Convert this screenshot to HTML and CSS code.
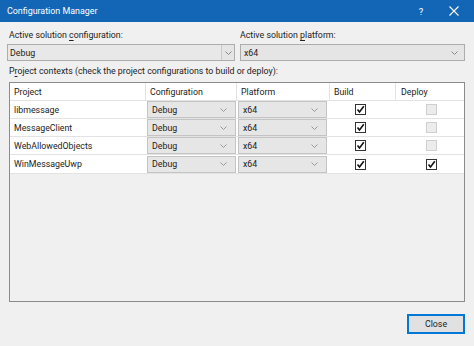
FILE: index.html
```html
<!DOCTYPE html>
<html>
<head>
<meta charset="utf-8">
<link rel="stylesheet" href="styles.css">
</head>
<body>
<div class="window">
  <div class="titlebar">
    <span class="title">Configuration Manager</span>
    <span class="help">?</span>
    <span class="close-x"><svg width="10" height="10" viewBox="0 0 10 10"><path d="M0.5 0.5 L9.5 9.5 M9.5 0.5 L0.5 9.5" stroke="#fff" stroke-width="1.1" fill="none"/></svg></span>
  </div>
  <div class="content">
    <div class="top">
      <div class="field">
        <div class="label">Active solution <u>c</u>onfiguration:</div>
        <div class="combo combo-edit">
          <div class="edit">Debug</div>
          <div class="btn"><svg width="7" height="4" viewBox="0 0 7 4"><path d="M0.5 0.5 L3.5 3.5 L6.5 0.5" stroke="#888" fill="none"/></svg></div>
        </div>
      </div>
      <div class="field">
        <div class="label">Active solution <u>p</u>latform:</div>
        <div class="combo">
          <span>x64</span>
          <svg width="7" height="4" viewBox="0 0 7 4"><path d="M0.5 0.5 L3.5 3.5 L6.5 0.5" stroke="#888" fill="none"/></svg>
        </div>
      </div>
    </div>
    <div class="label ctx">P<u>r</u>oject contexts (check the project configurations to build or deploy):</div>
    <div class="grid">
      <div class="row head">
        <div class="cell">Project</div>
        <div class="cell">Configuration</div>
        <div class="cell">Platform</div>
        <div class="cell">Build</div>
        <div class="cell">Deploy</div>
      </div>
      <div class="row">
        <div class="cell name">libmessage</div>
        <div class="cell"><div class="cc"><span>Debug</span><svg width="7" height="4" viewBox="0 0 7 4"><path d="M0.5 0.5 L3.5 3.5 L6.5 0.5" stroke="#999" fill="none"/></svg></div></div>
        <div class="cell"><div class="cc"><span>x64</span><svg width="7" height="4" viewBox="0 0 7 4"><path d="M0.5 0.5 L3.5 3.5 L6.5 0.5" stroke="#999" fill="none"/></svg></div></div>
        <div class="cell ck"><span class="box on"><svg width="9" height="9" viewBox="0 0 9 9"><path d="M1.5 4.5 L3.5 7 L7.8 1.2" stroke="#111" stroke-width="1.6" fill="none"/></svg></span></div>
        <div class="cell ck"><span class="box dis"></span></div>
      </div>
      <div class="row">
        <div class="cell name">MessageClient</div>
        <div class="cell"><div class="cc"><span>Debug</span><svg width="7" height="4" viewBox="0 0 7 4"><path d="M0.5 0.5 L3.5 3.5 L6.5 0.5" stroke="#999" fill="none"/></svg></div></div>
        <div class="cell"><div class="cc"><span>x64</span><svg width="7" height="4" viewBox="0 0 7 4"><path d="M0.5 0.5 L3.5 3.5 L6.5 0.5" stroke="#999" fill="none"/></svg></div></div>
        <div class="cell ck"><span class="box on"><svg width="9" height="9" viewBox="0 0 9 9"><path d="M1.5 4.5 L3.5 7 L7.8 1.2" stroke="#111" stroke-width="1.6" fill="none"/></svg></span></div>
        <div class="cell ck"><span class="box dis"></span></div>
      </div>
      <div class="row">
        <div class="cell name">WebAllowedObjects</div>
        <div class="cell"><div class="cc"><span>Debug</span><svg width="7" height="4" viewBox="0 0 7 4"><path d="M0.5 0.5 L3.5 3.5 L6.5 0.5" stroke="#999" fill="none"/></svg></div></div>
        <div class="cell"><div class="cc"><span>x64</span><svg width="7" height="4" viewBox="0 0 7 4"><path d="M0.5 0.5 L3.5 3.5 L6.5 0.5" stroke="#999" fill="none"/></svg></div></div>
        <div class="cell ck"><span class="box on"><svg width="9" height="9" viewBox="0 0 9 9"><path d="M1.5 4.5 L3.5 7 L7.8 1.2" stroke="#111" stroke-width="1.6" fill="none"/></svg></span></div>
        <div class="cell ck"><span class="box dis"></span></div>
      </div>
      <div class="row">
        <div class="cell name">WinMessageUwp</div>
        <div class="cell"><div class="cc"><span>Debug</span><svg width="7" height="4" viewBox="0 0 7 4"><path d="M0.5 0.5 L3.5 3.5 L6.5 0.5" stroke="#999" fill="none"/></svg></div></div>
        <div class="cell"><div class="cc"><span>x64</span><svg width="7" height="4" viewBox="0 0 7 4"><path d="M0.5 0.5 L3.5 3.5 L6.5 0.5" stroke="#999" fill="none"/></svg></div></div>
        <div class="cell ck"><span class="box on"><svg width="9" height="9" viewBox="0 0 9 9"><path d="M1.5 4.5 L3.5 7 L7.8 1.2" stroke="#111" stroke-width="1.6" fill="none"/></svg></span></div>
        <div class="cell ck"><span class="box on"><svg width="9" height="9" viewBox="0 0 9 9"><path d="M1.5 4.5 L3.5 7 L7.8 1.2" stroke="#111" stroke-width="1.6" fill="none"/></svg></span></div>
      </div>
    </div>
    <div class="footer">
      <button class="btn-close">Close</button>
    </div>
  </div>
</div>
</body>
</html>
```
FILE: styles.css
```css
* { box-sizing: border-box; }
html, body { margin: 0; padding: 0; }
body {
  font-family: Roboto, "Noto Sans", sans-serif;
  font-size: 8.8px;
  color: #222;
  background: #f0f0f0;
}
.window {
  width: 474px;
  height: 346px;
  background: #f0f0f0;
  display: flex;
  flex-direction: column;
}
.titlebar {
  height: 22px;
  background: #1366b6;
  color: #fff;
  display: flex;
  align-items: center;
  padding-left: 7px;
  font-size: 8.9px;
}
.title { flex: 1; }
.help { width: 14px; margin-right: 21px; text-align: center; font-size: 9.5px; }
.close-x { width: 10px; margin-right: 15px; display: flex; align-items: center; }
.content {
  flex: 1;
  display: flex;
  flex-direction: column;
  padding: 5px 9px 12px 9px;
}
.label { line-height: 16px; height: 16px; white-space: nowrap; }
.label u { text-decoration-thickness: 1px; text-underline-offset: 1.5px; }
.top { display: flex; gap: 5px; margin-left: -2px; }
.field { display: flex; flex-direction: column; gap: 0; }
.field:first-child { width: 228px; }
.field:last-child { flex: 1; margin-left: 0; }
.field .label { padding-left: 2px; }
.field:last-child .label { padding-left: 0; }
.combo {
  margin-top: 1px;
  height: 17px;
  border: 1px solid #adadad;
  background: #e5e5e5;
  display: flex;
  align-items: center;
  justify-content: space-between;
  padding: 0 6px 0 3px;
}
.combo-edit { padding: 0; }
.combo-edit .edit {
  flex: 1;
  height: 100%;
  border-right: 1px solid #c8c8c8;
  display: flex;
  align-items: center;
  padding-left: 2px;
  background: #e8e8e8;
}
.combo-edit .btn {
  width: 12px;
  display: flex;
  justify-content: center;
  align-items: center;
  height: 100%;
}
.ctx { margin-top: 2px; }
.grid {
  margin-top: 3px;
  height: 220px;
  border: 1px solid #8c8c8c;
  background: #f0f0f0;
}
.row {
  display: grid;
  grid-template-columns: 136px 91px 93px 66px 69px;
  height: 18px;
  background: #fff;
  border-bottom: 1px solid #e3e3e3;
}
.row:nth-child(5) { height: 19px; }
.head { height: 18px; }
.head .cell { border-right: 1px solid #e3e3e3; padding-left: 4px; }
.head .cell:last-child { border-right: none; padding-left: 5px; }
.cell {
  display: flex;
  align-items: center;
  white-space: nowrap;
  overflow: hidden;
}
.name { padding-left: 4px; }
.cc {
  margin-left: 1px;
  width: 89px;
  height: 17px;
  border: 1px solid #c4c4c4;
  background: #e6e6e6;
  display: flex;
  align-items: center;
  justify-content: space-between;
  padding: 0 8px 0 4px;
}
.ck { justify-content: center; }
.ck:nth-child(4) { padding-right: 6px; }
.ck:nth-child(5) { padding-left: 1px; }
.box {
  width: 11px;
  height: 11px;
  border: 1px solid #333;
  background: #fff;
  display: flex;
  align-items: center;
  justify-content: center;
}
.box.dis { border-color: #cfcfcf; background: #ececec; }
.footer {
  flex: 1;
  display: flex;
  justify-content: flex-end;
  align-items: flex-end;
  padding-right: 0;
}
.btn-close {
  width: 58px;
  height: 20px;
  border: 1px solid #0078d7;
  box-shadow: inset 0 0 0 1px #0078d7;
  background: #e1e1e1;
  font-family: inherit;
  font-size: 8.8px;
  color: #222;
  padding: 0;
}
```
